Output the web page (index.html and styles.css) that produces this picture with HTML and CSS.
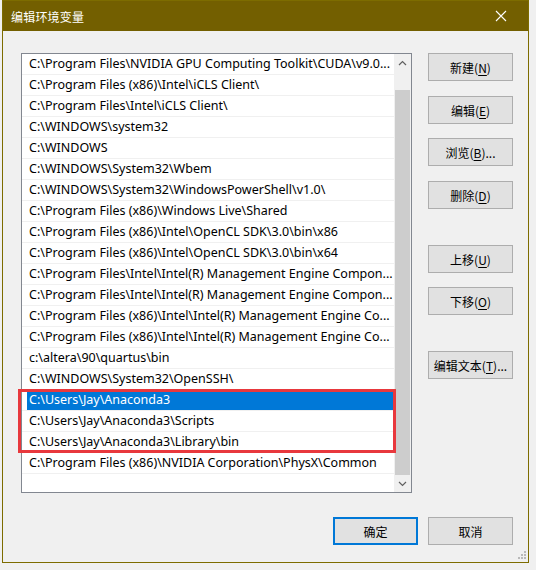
FILE: index.html
```html
<!DOCTYPE html>
<html lang="zh-CN">
<head>
<meta charset="utf-8">
<title>编辑环境变量</title>
<link rel="stylesheet" href="styles.css">
</head>
<body>
<div class="dialog">
  <div class="titlebar">
    <span class="title">编辑环境变量</span>
    <svg class="close" width="12" height="12" viewBox="0 0 12 12"><path d="M1 1 L11 11 M11 1 L1 11" stroke="#ffffff" stroke-width="1.1" fill="none"/></svg>
  </div>
  <div class="content">
    <div class="listbox">
      <div class="rows">
        <div class="row"><span class="label">C:\Program Files\NVIDIA GPU Computing Toolkit\CUDA\v9.0...</span></div>
        <div class="row"><span class="label">C:\Program Files (x86)\Intel\iCLS Client\</span></div>
        <div class="row"><span class="label">C:\Program Files\Intel\iCLS Client\</span></div>
        <div class="row"><span class="label">C:\WINDOWS\system32</span></div>
        <div class="row"><span class="label">C:\WINDOWS</span></div>
        <div class="row"><span class="label">C:\WINDOWS\System32\Wbem</span></div>
        <div class="row"><span class="label">C:\WINDOWS\System32\WindowsPowerShell\v1.0\</span></div>
        <div class="row"><span class="label">C:\Program Files (x86)\Windows Live\Shared</span></div>
        <div class="row"><span class="label">C:\Program Files (x86)\Intel\OpenCL SDK\3.0\bin\x86</span></div>
        <div class="row"><span class="label">C:\Program Files (x86)\Intel\OpenCL SDK\3.0\bin\x64</span></div>
        <div class="row"><span class="label">C:\Program Files\Intel\Intel(R) Management Engine Compon...</span></div>
        <div class="row"><span class="label">C:\Program Files\Intel\Intel(R) Management Engine Compon...</span></div>
        <div class="row"><span class="label">C:\Program Files (x86)\Intel\Intel(R) Management Engine Co...</span></div>
        <div class="row"><span class="label">C:\Program Files (x86)\Intel\Intel(R) Management Engine Co...</span></div>
        <div class="row"><span class="label">c:\altera\90\quartus\bin</span></div>
        <div class="row"><span class="label">C:\WINDOWS\System32\OpenSSH\</span></div>
        <div class="row selected"><span class="label">C:\Users\Jay\Anaconda3</span></div>
        <div class="row"><span class="label">C:\Users\Jay\Anaconda3\Scripts</span></div>
        <div class="row"><span class="label">C:\Users\Jay\Anaconda3\Library\bin</span></div>
        <div class="row"><span class="label">C:\Program Files (x86)\NVIDIA Corporation\PhysX\Common</span></div>
      </div>
      <div class="scrollbar">
        <div class="arrow">
          <svg width="9" height="6" viewBox="0 0 9 6"><path d="M1 5 L4.5 1.5 L8 5" stroke="#606060" stroke-width="1.2" fill="none"/></svg>
        </div>
        <div class="track"><div class="thumb"></div></div>
        <div class="arrow">
          <svg width="9" height="6" viewBox="0 0 9 6"><path d="M1 1 L4.5 4.5 L8 1" stroke="#606060" stroke-width="1.2" fill="none"/></svg>
        </div>
      </div>
      <div class="highlight-box"></div>
    </div>
    <div class="side-buttons">
      <button class="btn">新建(<u>N</u>)</button>
      <button class="btn">编辑(<u>E</u>)</button>
      <button class="btn">浏览(<u>B</u>)...</button>
      <button class="btn">删除(<u>D</u>)</button>
      <button class="btn move-up">上移(<u>U</u>)</button>
      <button class="btn">下移(<u>O</u>)</button>
      <button class="btn edit-text">编辑文本(<u>T</u>)...</button>
    </div>
  </div>
  <div class="footer">
    <button class="btn default">确定</button>
    <button class="btn">取消</button>
  </div>
  <div class="grip">
    <span class="dot d1"></span><span class="dot d2"></span><span class="dot d3"></span>
    <span class="dot d4"></span><span class="dot d5"></span><span class="dot d6"></span>
  </div>
</div>
</body>
</html>
```

FILE: styles.css
```css
html, body {
  margin: 0;
  padding: 0;
}
body {
  width: 536px;
  height: 570px;
  overflow: hidden;
  background: #f0f0f0;
  font-family: "Noto Sans", "Noto Sans CJK SC", sans-serif;
  font-size: 12.5px;
  color: #000;
}
.dialog {
  position: relative;
  margin-left: 2px;
  width: 525px;
  height: 561px;
  border: 1px solid #7d6c00;
  background: #f0f0f0;
  display: flex;
  flex-direction: column;
}
.titlebar {
  height: 30px;
  background: #735f00;
  display: flex;
  align-items: center;
  justify-content: space-between;
  padding: 0 21px 0 8px;
  flex-shrink: 0;
}
.title {
  color: #ffffff;
  font-family: "Noto Sans CJK SC", sans-serif;
  font-size: 12px;
  letter-spacing: 0.2px;
}
.close {
  display: block;
}
.content {
  display: flex;
  padding: 22px 15px 0 18px;
}
.listbox {
  position: relative;
  width: 389px;
  height: 438px;
  border: 1px solid #828790;
  background: #ffffff;
  display: flex;
}
.rows {
  flex: 1;
  overflow: hidden;
}
.row {
  height: 20px;
  border-bottom: 1px solid #f0f0f0;
  display: flex;
  padding-left: 5px;
}
.label {
  flex: 1;
  padding-left: 2px;
  line-height: 20px;
  white-space: nowrap;
  overflow: hidden;
}
.row.selected .label {
  background: #0078d7;
  color: #ffffff;
}
.scrollbar {
  width: 17px;
  background: #f0f0f0;
  display: flex;
  flex-direction: column;
}
.arrow {
  height: 17px;
  display: flex;
  align-items: center;
  justify-content: center;
}
.track {
  flex: 1;
  display: flex;
  flex-direction: column;
  padding: 19px 1px 0 1px;
}
.thumb {
  flex: 1;
  background: #cdcdcd;
}
.highlight-box {
  position: absolute;
  left: -4px;
  top: 335px;
  width: 372px;
  height: 58px;
  border: 3px solid #e8383d;
}
.side-buttons {
  margin-left: 16px;
  display: flex;
  flex-direction: column;
}
.btn {
  width: 85px;
  height: 28px;
  margin: 0;
  padding: 0;
  border: 1px solid #adadad;
  background: #e1e1e1;
  font-family: "Noto Sans CJK SC", "Noto Sans", sans-serif;
  font-size: 12px;
  color: #000;
  text-align: center;
}
.btn u {
  text-decoration-thickness: 1px;
  text-underline-offset: 2px;
}
.side-buttons .btn + .btn {
  margin-top: 15px;
}
.side-buttons .btn:nth-child(3),
.side-buttons .btn:nth-child(6) {
  margin-top: 14px;
}
.side-buttons .btn.move-up,
.side-buttons .btn.edit-text {
  margin-top: 36px;
}
.footer {
  display: flex;
  justify-content: flex-end;
  gap: 10px;
  padding: 24px 15px 0 0;
}
.btn.default {
  border: 2px solid #0078d7;
}
.grip {
  position: absolute;
  right: 2px;
  bottom: 2px;
  width: 9px;
  height: 9px;
}
.dot {
  position: absolute;
  width: 2px;
  height: 2px;
  background: #b9b9b9;
}
.d1 { right: 0; top: 0; }
.d2 { right: 0; top: 3px; }
.d3 { right: 3px; top: 3px; }
.d4 { right: 0; top: 6px; }
.d5 { right: 3px; top: 6px; }
.d6 { right: 6px; top: 6px; }
```
